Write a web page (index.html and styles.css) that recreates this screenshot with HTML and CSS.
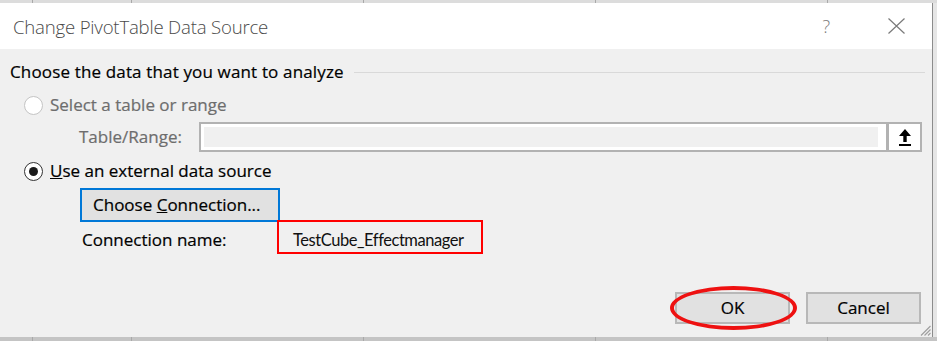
FILE: index.html
```html
<!DOCTYPE html>
<html>
<head>
<meta charset="utf-8">
<link rel="stylesheet" href="styles.css">
</head>
<body>
<div class="screen">
  <div class="strip strip-top"></div>
  <div class="middle">
    <div class="dialog">
      <div class="titlebar">
        <span class="title">Change PivotTable Data Source</span>
        <span class="help">?</span>
        <svg class="close" width="17" height="16" viewBox="0 0 17 16"><path d="M0.5 0.5 L16.5 15.5 M16.5 0.5 L0.5 15.5" stroke="#7a7a7a" stroke-width="1.2" fill="none"/></svg>
      </div>
      <div class="body">
        <div class="group-head">
          <span class="group-text">Choose the data that you want to analyze</span>
          <span class="group-line"></span>
        </div>
        <div class="radio-row disabled">
          <span class="radio"></span>
          <span class="radio-label">Select a table or range</span>
        </div>
        <div class="range-row">
          <span class="range-label">Table/Range:</span>
          <div class="range-input"><div class="range-fill"></div></div>
          <div class="range-btn">
            <svg width="12" height="17" viewBox="0 0 12 17"><path d="M6 0 L0 7 L4.3 7 L4.3 13 L7.7 13 L7.7 7 L12 7 Z" fill="#000"/><rect x="0" y="15" width="12" height="2" fill="#000"/></svg>
          </div>
        </div>
        <div class="radio-row">
          <span class="radio checked"><span class="dot"></span></span>
          <span class="radio-label"><u>U</u>se an external data source</span>
        </div>
        <div class="conn-btn-row">
          <div class="conn-btn"><span>Choose <u>C</u>onnection...</span></div>
        </div>
        <div class="conn-row">
          <span class="conn-label">Connection name:</span>
          <span class="conn-value">TestCube_Effectmanager<span class="mark-box"></span></span>
        </div>
        <div class="footer">
          <div class="btn ok">OK<span class="mark-ellipse"></span></div>
          <div class="btn">Cancel</div>
          <svg class="grip" width="11" height="11" viewBox="0 0 11 11"><path d="M10.5 1 L1 10.5 M10.5 4.5 L4.5 10.5 M10.5 8 L8 10.5" stroke="#a0a0a0" stroke-width="1.2" fill="none"/></svg>
        </div>
      </div>
    </div>
    <div class="outside"></div>
  </div>
  <div class="strip strip-bottom"></div>
</div>
</body>
</html>
```

FILE: styles.css
```css
html, body {
  margin: 0;
  padding: 0;
}
body {
  width: 937px;
  height: 341px;
  overflow: hidden;
  background: #d6d6d6;
  font-family: "Open Sans", "Noto Sans", sans-serif;
}
.screen {
  display: flex;
  flex-direction: column;
  width: 937px;
  height: 341px;
}
.strip {
  background-color: #d4d4d4;
  background-image:
    linear-gradient(90deg, transparent 32px, #a9a9a9 32px, #a9a9a9 33px, transparent 33px),
    repeating-linear-gradient(90deg, transparent 0, transparent 131px, #a9a9a9 131px, #a9a9a9 132px, transparent 132px, transparent 232px);
}
.strip-top {
  height: 3px;
  background-color: #dcdcdc;
}
.strip-bottom {
  height: 4px;
  background-color: #c4c4c4;
}
.middle {
  display: flex;
  height: 334px;
}
.dialog {
  width: 932px;
  border-right: 1px solid #8c8c8c;
  display: flex;
  flex-direction: column;
  background: #f0f0f0;
}
.outside {
  flex: 1;
  background: #e6e6e6;
}
.titlebar {
  height: 46px;
  background: #ffffff;
  display: flex;
  align-items: center;
  padding-left: 13px;
}
.title {
  font-size: 18.6px;
  font-weight: 300;
  color: #4a4a4a;
  letter-spacing: -0.2px;
  flex: 1;
}
.help {
  font-size: 18px;
  font-weight: 300;
  color: #7a7a7a;
  margin-right: 58px;
}
.close {
  margin-right: 27px;
}
.body {
  flex: 1;
  display: flex;
  flex-direction: column;
  padding-top: 13px;
  font-size: 17px;
  color: #000;
  line-height: 20px;
  -webkit-text-stroke: 0.2px currentColor;
}
.group-head {
  display: flex;
  align-items: center;
  height: 20px;
  padding-left: 10px;
}
.group-text {
  white-space: nowrap;
  letter-spacing: 0.15px;
}
.group-line {
  flex: 1;
  height: 1px;
  background: #d9d9d9;
  margin-left: 10px;
  margin-right: 7px;
}
.radio-row {
  display: flex;
  align-items: center;
  height: 20px;
  padding-left: 24px;
  margin-top: 13px;
}
.radio-row + .conn-btn-row {
  margin-top: 7px;
}
.radio {
  width: 19px;
  height: 19px;
  box-sizing: border-box;
  border: 1px solid #333;
  border-radius: 50%;
  background: #fff;
  display: flex;
  align-items: center;
  justify-content: center;
  margin-right: 7px;
  flex-shrink: 0;
}
.disabled .radio {
  border-color: #c4c4c4;
}
.disabled .radio-label {
  color: #6d6d6d;
}
.dot {
  width: 9px;
  height: 9px;
  border-radius: 50%;
  background: #1a1a1a;
}
.range-row {
  display: flex;
  align-items: center;
  padding-left: 79px;
  padding-right: 10px;
  margin-top: 7px;
  height: 30px;
}
.range-row + .radio-row {
  margin-top: 9px;
}
.range-label {
  width: 120px;
  color: #6d6d6d;
}
.range-input {
  flex: 1;
  height: 30px;
  box-sizing: border-box;
  border: 2px solid #b2b2b2;
  background: #fff;
  padding: 3px 8px 3px 3px;
}
.range-fill {
  height: 100%;
  background: #f0f0f0;
}
.range-btn {
  width: 34px;
  height: 30px;
  box-sizing: border-box;
  border: 2px solid #b2b2b2;
  border-left-width: 1px;
  background: #fff;
  display: flex;
  align-items: center;
  justify-content: center;
}
.conn-btn-row {
  padding-left: 80px;
}
.conn-btn {
  width: 200px;
  height: 34px;
  box-sizing: border-box;
  border: 2px solid #0078d7;
  background: #e1e1e1;
  display: flex;
  align-items: center;
  padding-left: 11px;
  white-space: nowrap;
}
.conn-row {
  display: flex;
  align-items: center;
  height: 20px;
  padding-left: 82px;
  margin-top: 8px;
}
.conn-label {
  width: 211px;
}
.conn-value {
  position: relative;
  font-family: "Lato", "Open Sans", sans-serif;
  font-size: 16.5px;
  letter-spacing: -0.45px;
  color: #111;
  -webkit-text-stroke: 0;
}
.mark-box {
  position: absolute;
  left: -16px;
  top: -10px;
  width: 206px;
  height: 34px;
  box-sizing: border-box;
  border: 2px solid #ff0000;
}
.footer {
  margin-top: auto;
  display: flex;
  justify-content: flex-end;
  align-items: flex-start;
  gap: 16px;
  padding-right: 11px;
  height: 45px;
  position: relative;
}
.btn {
  width: 115px;
  height: 32px;
  box-sizing: border-box;
  border: 2px solid #b8b8b8;
  background: #e1e1e1;
  display: flex;
  align-items: center;
  justify-content: center;
  position: relative;
}
.mark-ellipse {
  position: absolute;
  left: -7px;
  top: -8px;
  width: 127px;
  height: 44px;
  box-sizing: border-box;
  border: 4px solid #ee1111;
  border-radius: 50%;
}
.grip {
  position: absolute;
  right: 1px;
  bottom: 1px;
}
```
